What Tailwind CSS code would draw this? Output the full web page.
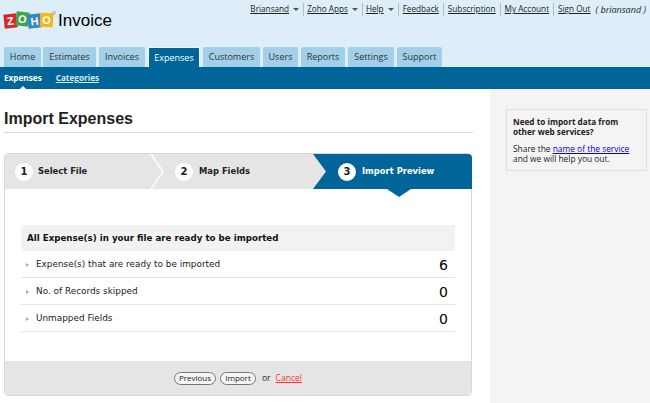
<!DOCTYPE html>
<html lang="en">
<head>
  <meta charset="UTF-8">
  <title>Zoho Invoice - Import Expenses</title>
  <script src="https://cdn.jsdelivr.net/npm/@tailwindcss/browser@4"></script>
</head>
<body class="w-[650px] h-[403px] overflow-hidden bg-white text-[#222] font-['DejaVu_Sans',sans-serif] text-[9px]">

  <!-- Header -->
  <header class="h-[67px] bg-[#ddeef9] flex flex-col justify-between">
    <div class="flex justify-between">
      <!-- Logo -->
      <div class="flex items-center pl-1 pt-3">
        <div class="flex items-center relative">
          <span class="w-[13px] h-[14px] bg-[#d8262c] text-white font-bold text-[11px] leading-[14px] text-center -rotate-6 font-['Liberation_Sans',sans-serif]">Z</span>
          <span class="w-[13px] h-[14px] -ml-px -mt-1 bg-[#3fa648] text-white font-bold text-[11px] leading-[14px] text-center rotate-6 font-['Liberation_Sans',sans-serif]">O</span>
          <span class="w-[13px] h-[14px] -ml-px bg-[#2f86c9] text-white font-bold text-[11px] leading-[14px] text-center -rotate-6 font-['Liberation_Sans',sans-serif]">H</span>
          <span class="w-[13px] h-[14px] -ml-px -mt-px bg-[#f4b61a] text-white font-bold text-[11px] leading-[14px] text-center rotate-3 font-['Liberation_Sans',sans-serif]">O</span>
          <span class="absolute -right-[3px] -top-[3px] w-[4px] h-[4px] rounded-full border border-[#aaa]"></span>
        </div>
        <span class="ml-[5px] text-[17px] text-black font-['Liberation_Sans',sans-serif] leading-none">Invoice</span>
      </div>
      <!-- Top links -->
      <div class="flex items-center h-[17px] mt-px pr-[4px] text-[8.200px] text-[#222] font-['Open_Sans',sans-serif]">
        <a class="underline" href="#">Briansand</a>
        <span class="ml-[4px] mr-[4px] border-x-[3px] border-t-[3px] border-x-transparent border-t-[#555]"></span>
        <a class="underline pl-[3px] border-l border-[#bbb]" href="#">Zoho Apps</a>
        <span class="ml-[4px] mr-[4px] border-x-[3px] border-t-[3px] border-x-transparent border-t-[#555]"></span>
        <a class="underline pl-[3px] border-l border-[#bbb]" href="#">Help</a>
        <span class="ml-[4px] mr-[4px] border-x-[3px] border-t-[3px] border-x-transparent border-t-[#555]"></span>
        <a class="underline pl-1 mr-1 border-l border-[#bbb]" href="#">Feedback</a>
        <a class="underline pl-1 mr-1 border-l border-[#bbb]" href="#">Subscription</a>
        <a class="underline pl-1 mr-1 border-l border-[#bbb]" href="#">My Account</a>
        <a class="underline pl-1 border-l border-[#bbb]" href="#">Sign Out</a>
        <i class="ml-[5px] text-[9px]">( briansand )</i>
      </div>
    </div>
    <!-- Tabs -->
    <nav class="flex pl-1 h-[20px] text-[9px] text-[#333] font-['Open_Sans',sans-serif]">
      <a class="w-[37px] flex items-center justify-center bg-[#a2d0e8] rounded-t-[2px]">Home</a>
      <a class="ml-[2px] w-[53px] flex items-center justify-center bg-[#a2d0e8] rounded-t-[2px]">Estimates</a>
      <a class="ml-[3px] w-[46px] flex items-center justify-center bg-[#a2d0e8] rounded-t-[2px]">Invoices</a>
      <a class="ml-[3px] w-[52px] flex items-center justify-center bg-[#006699] border-x border-t border-[#f0f8fc] text-white rounded-t-[2px]">Expenses</a>
      <a class="ml-[3px] w-[57px] flex items-center justify-center bg-[#a2d0e8] rounded-t-[2px]">Customers</a>
      <a class="ml-[3px] w-[35px] flex items-center justify-center bg-[#a2d0e8] rounded-t-[2px]">Users</a>
      <a class="ml-[3px] w-[44px] flex items-center justify-center bg-[#a2d0e8] rounded-t-[2px]">Reports</a>
      <a class="ml-[3px] w-[46px] flex items-center justify-center bg-[#a2d0e8] rounded-t-[2px]">Settings</a>
      <a class="ml-[3px] w-[45px] flex items-center justify-center bg-[#a2d0e8] rounded-t-[2px]">Support</a>
    </nav>
  </header>

  <!-- Sub nav -->
  <div class="h-[22px] bg-[#006699] flex items-center gap-[14px] pl-1 text-white font-bold text-[8.200px] font-['Open_Sans',sans-serif] relative">
    <span>Expenses</span>
    <a class="underline font-bold text-[#d8e9f3]" href="#">Categories</a>
    <span class="absolute left-[20px] bottom-0 border-x-[3px] border-b-[3px] border-x-transparent border-b-white"></span>
  </div>

  <div class="flex h-[314px]">
    <!-- Main -->
    <main class="w-[490px] pl-1 pr-[17px]">
      <h1 class="h-[44px] pt-[20px] border-b border-[#ddd] font-['Liberation_Sans',sans-serif] font-bold text-[16px] leading-[19px] text-[#222]">Import Expenses</h1>

      <!-- Card -->
      <div class="mt-[20px] w-[468px] h-[243px] border border-[#d8d8d8] rounded-[4px] flex flex-col">
        <!-- Steps -->
        <div class="h-[35px] flex bg-[#e5e5e5] rounded-t-[4px] font-bold text-[8.400px] relative">
          <svg class="absolute left-0 top-0" width="468" height="46" viewBox="0 0 468 46">
            <path d="M308 0 H463 a4 4 0 0 1 4 4 V35 H406 L394 43 L382 35 H308 L321 17.500 Z" fill="#006699"/>
            <path d="M146 0 L158 17.500 L146 35" fill="none" stroke="#fff" stroke-width="1.500"/>
          </svg>
          <div class="w-[146px] flex items-center pl-[10px] gap-[5px] relative">
            <span class="w-[18px] h-[18px] rounded-full bg-white flex items-center justify-center text-[10px] text-[#222]">1</span>Select File
          </div>
          <div class="w-[162px] flex items-center pl-[24px] gap-[6px] relative">
            <span class="w-[18px] h-[18px] rounded-full bg-white flex items-center justify-center text-[10px] text-[#222]">2</span>Map Fields
          </div>
          <div class="flex-1 flex items-center pl-[25px] gap-[6px] text-white relative">
            <span class="w-[18px] h-[18px] rounded-full bg-white flex items-center justify-center text-[10px] text-[#222]">3</span>Import Preview
          </div>
        </div>

        <!-- Summary -->
        <div class="mt-[36px] mx-4 flex-1">
          <div class="h-[26px] bg-[#f2f2f2] flex items-center pl-[6px] pt-[2px] font-bold text-[8.700px] text-[#111]">All Expense(s) in your file are ready to be imported</div>
          <div class="h-[27px] border-b border-[#e2e2e2] flex items-center justify-between pr-[7px] pt-[2px] text-[8.900px]">
            <span class="flex items-center"><span class="ml-[5px] mr-[7px] border-y-[2.500px] border-l-[3px] border-y-transparent border-l-[#aaa]"></span>Expense(s) that are ready to be imported</span>
            <span class="text-[14px] text-black">6</span>
          </div>
          <div class="h-[27px] border-b border-[#e2e2e2] flex items-center justify-between pr-[7px] pt-[2px] text-[8.900px]">
            <span class="flex items-center"><span class="ml-[5px] mr-[7px] border-y-[2.500px] border-l-[3px] border-y-transparent border-l-[#aaa]"></span>No. of Records skipped</span>
            <span class="text-[14px] text-black">0</span>
          </div>
          <div class="h-[27px] border-b border-[#e2e2e2] flex items-center justify-between pr-[7px] pt-[2px] text-[8.900px]">
            <span class="flex items-center"><span class="ml-[5px] mr-[7px] border-y-[2.500px] border-l-[3px] border-y-transparent border-l-[#aaa]"></span>Unmapped Fields</span>
            <span class="text-[14px] text-black">0</span>
          </div>
        </div>

        <!-- Footer -->
        <div class="h-[34px] bg-[#e5e5e5] rounded-b-[4px] flex items-center pl-[169px] text-[8.500px] font-['Open_Sans',sans-serif]">
          <button class="h-[13px] w-[42px] border border-[#777] rounded-full bg-white/60 text-[8px] leading-none">Previous</button>
          <button class="ml-[4px] h-[13px] w-[36px] border border-[#777] rounded-full bg-white/60 text-[8px] leading-none">Import</button>
          <span class="ml-[6px]">or</span>
          <a class="ml-[5px] underline text-[#f33]" href="#">Cancel</a>
        </div>
      </div>
    </main>

    <!-- Sidebar -->
    <aside class="w-[160px] bg-[#f4f4f4] pt-[20px] pl-[16px]">
      <div class="w-[141px] h-[62px] border border-[#e0e0e0] px-[6px] pt-[4px] text-[8.400px] leading-[10px] text-[#222] font-['Open_Sans',sans-serif]">
        <p class="font-bold text-[8.200px] leading-[10px] mt-[3px]">Need to import data from<br>other web services?</p>
        <p class="mt-[7px]">Share the <a class="underline text-[#00f]" href="#">name of the service</a><br>and we will help you out.</p>
      </div>
    </aside>
  </div>
</body>
</html>
